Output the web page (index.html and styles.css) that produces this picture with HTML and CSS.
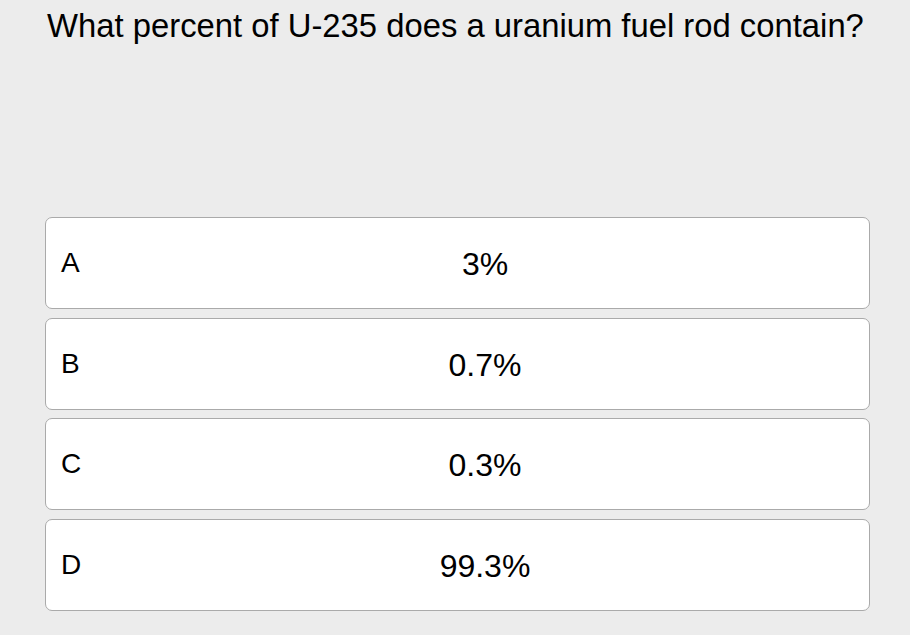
FILE: index.html
```html
<!DOCTYPE html>
<html lang="en">
<head>
<meta charset="utf-8">
<title>Quiz</title>
<link rel="stylesheet" href="styles.css">
</head>
<body>
<main class="quiz">
  <div class="question">
    <h1 class="question-text">What percent of U-235 does a uranium fuel rod contain?</h1>
  </div>
  <ul class="options">
    <li class="option"><span class="letter">A</span><span class="value">3%</span></li>
    <li class="option"><span class="letter">B</span><span class="value">0.7%</span></li>
    <li class="option"><span class="letter">C</span><span class="value">0.3%</span></li>
    <li class="option"><span class="letter">D</span><span class="value">99.3%</span></li>
  </ul>
</main>
</body>
</html>
```

FILE: styles.css
```css
html, body {
  margin: 0;
  padding: 0;
  background: #ececec;
  font-family: "Liberation Sans", Arial, sans-serif;
  color: #000;
}

.quiz {
  width: 910px;
  height: 635px;
  box-sizing: border-box;
  padding: 7px 40px 0 45px;
}

.question {
  height: 210px;
}

.question-text {
  margin: 0 -41px 0 -45px;
  font-size: 32.8px;
  font-weight: normal;
  line-height: 37px;
  text-align: center;
}

.options {
  list-style: none;
  margin: 0;
  padding: 0;
  display: flex;
  flex-direction: column;
  gap: 8.67px;
}

.option {
  display: flex;
  align-items: center;
  height: 92px;
  box-sizing: border-box;
  background: #fff;
  border: 1px solid #aaaaaa;
  border-radius: 7px;
}

.letter {
  width: 40px;
  padding-left: 15px;
  font-size: 28px;
  line-height: 1;
}

.value {
  flex: 1;
  text-align: center;
  font-size: 32px;
  line-height: 1;
  margin-top: 2px;
}
```
